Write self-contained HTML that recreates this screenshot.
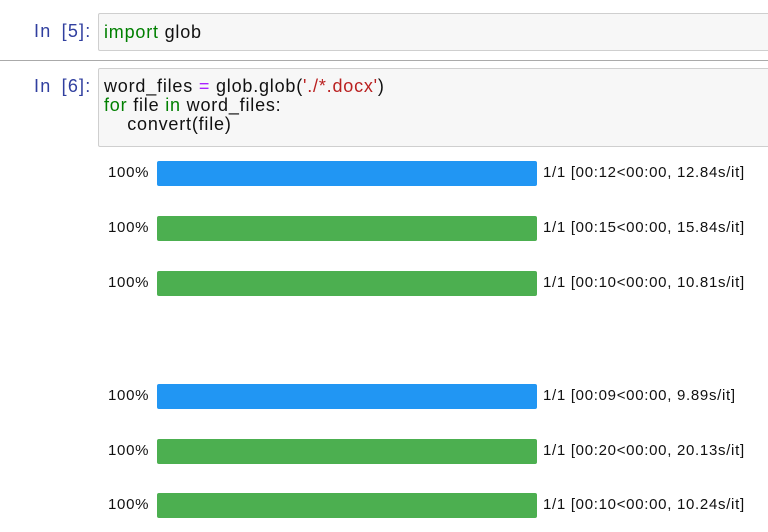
<!DOCTYPE html><html><head><style>
body{margin:0;width:768px;height:532px;background:#fff;font-family:"Liberation Sans",sans-serif;position:relative;overflow:hidden}
.p{position:absolute;color:#303f9f;font-size:18px;left:34px;letter-spacing:1.2px;word-spacing:4px}
.box{position:absolute;left:98px;width:680px;background:#f7f7f7;border:1px solid #cfcfcf;border-radius:2px;font-size:18px;letter-spacing:0.8px;color:#111;box-sizing:border-box;padding:0 0 0 5px;line-height:19px}
.k{color:#008000}.o{color:#aa22ff}.s{color:#ba2121}
.pc{position:absolute;left:108px;font-size:15px;letter-spacing:0.7px;color:#111}
.bar{position:absolute;left:157px;width:380px;height:25px;border-radius:2px}
.t{position:absolute;left:543px;font-size:15px;letter-spacing:0.7px;color:#111}
</style></head><body>
<div class="p" style="top:21px">In [5]:</div>
<div class="box" style="top:13px;height:38px;padding-top:9px"><span class="k">import</span> glob</div>
<div style="position:absolute;left:0;top:60px;width:768px;height:1px;background:#aaa"></div>
<div class="p" style="top:76px">In [6]:</div>
<div class="box" style="top:68px;height:79px;padding-top:8px">word_files <span class="o">=</span> glob.glob(<span class="s">'./*.docx'</span>)<br><span class="k">for</span> file <span class="k">in</span> word_files:<br>&nbsp;&nbsp;&nbsp;&nbsp;convert(file)</div>

<div class="pc" style="top:164px">100%</div><div class="bar" style="top:161px;background:#2196f3"></div><div class="t" style="top:164px">1/1 [00:12&lt;00:00, 12.84s/it]</div>
<div class="pc" style="top:219px">100%</div><div class="bar" style="top:216px;background:#4caf50"></div><div class="t" style="top:219px">1/1 [00:15&lt;00:00, 15.84s/it]</div>
<div class="pc" style="top:274px">100%</div><div class="bar" style="top:271px;background:#4caf50"></div><div class="t" style="top:274px">1/1 [00:10&lt;00:00, 10.81s/it]</div>
<div class="pc" style="top:387px">100%</div><div class="bar" style="top:384px;background:#2196f3"></div><div class="t" style="top:387px">1/1 [00:09&lt;00:00, 9.89s/it]</div>
<div class="pc" style="top:442px">100%</div><div class="bar" style="top:439px;background:#4caf50"></div><div class="t" style="top:442px">1/1 [00:20&lt;00:00, 20.13s/it]</div>
<div class="pc" style="top:496px">100%</div><div class="bar" style="top:493px;background:#4caf50"></div><div class="t" style="top:496px">1/1 [00:10&lt;00:00, 10.24s/it]</div>
</body></html>
